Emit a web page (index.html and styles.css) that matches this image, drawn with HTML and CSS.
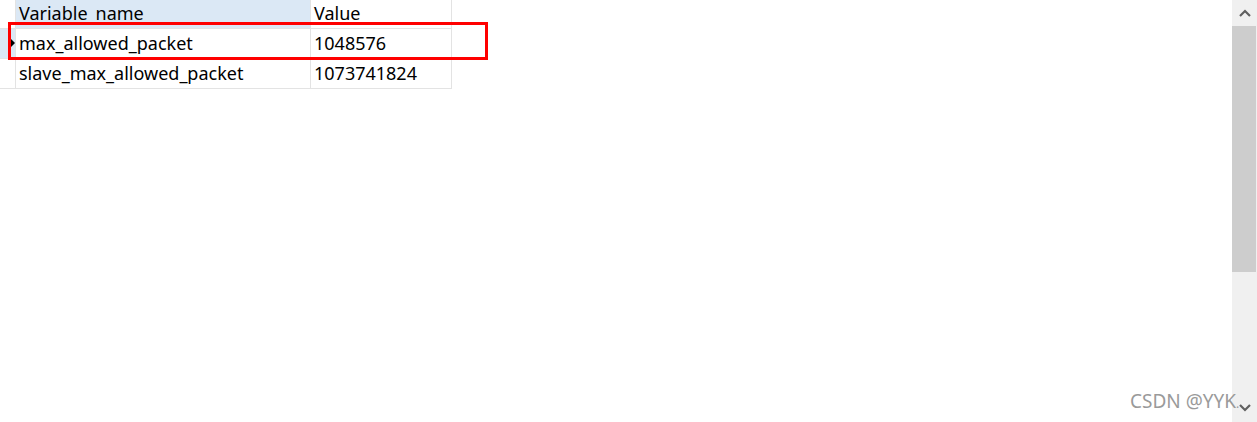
FILE: index.html
```html
<!DOCTYPE html>
<html>
<head>
<meta charset="utf-8">
<link rel="stylesheet" href="styles.css">
</head>
<body>
<div class="page">
  <div class="content">
    <div class="grid">
      <div class="row head">
        <div class="ind"></div>
        <div class="cell c1 sel">Variable_name</div>
        <div class="cell c2">Value</div>
      </div>
      <div class="row">
        <div class="ind cur"><span class="tri"></span></div>
        <div class="cell c1">max_allowed_packet</div>
        <div class="cell c2">1048576</div>
      </div>
      <div class="row">
        <div class="ind"></div>
        <div class="cell c1">slave_max_allowed_packet</div>
        <div class="cell c2">1073741824</div>
      </div>
      <div class="mark"></div>
    </div>
    <div class="watermark">CSDN @YYK<span class="dot">.</span></div>
  </div>
  <div class="scrollbar">
    <div class="arrow up"><svg width="12" height="8" viewBox="0 0 12 8"><path d="M1 7 L6 2 L11 7" fill="none" stroke="#606060" stroke-width="2.2"/></svg></div>
    <div class="thumb"></div>
    <div class="track"></div>
    <div class="arrow down"><svg width="12" height="8" viewBox="0 0 12 8"><path d="M1 1 L6 6 L11 1" fill="none" stroke="#606060" stroke-width="2.2"/></svg></div>
  </div>
</div>
</body>
</html>
```

FILE: styles.css
```css
html, body {
  margin: 0;
  padding: 0;
  background: #fff;
}
.page {
  display: flex;
  width: 1257px;
  height: 422px;
  overflow: hidden;
}
.content {
  flex: 1;
  position: relative;
}
.grid {
  position: relative;
  display: flex;
  flex-direction: column;
  width: 452px;
  font-family: "Noto Sans", "Noto Sans CJK SC", sans-serif;
  font-size: 18px;
  color: #000;
}
.row {
  display: flex;
  height: 30px;
}
.row.head {
  height: 29px;
}
.ind {
  width: 16px;
  box-sizing: border-box;
  border-right: 1px solid #e3e3e3;
  border-bottom: 1px solid #e3e3e3;
  position: relative;
}
.ind.cur {
  background: #dbe8f5;
}
.tri {
  position: absolute;
  left: 11px;
  top: 10px;
  z-index: 2;
  width: 0;
  height: 0;
  border-top: 4px solid transparent;
  border-bottom: 4px solid transparent;
  border-left: 4px solid #000;
}
.cell {
  box-sizing: border-box;
  border-right: 1px solid #e3e3e3;
  border-bottom: 1px solid #e3e3e3;
  padding: 0 0 0 3px;
  line-height: 29px;
  white-space: nowrap;
}
.c1 { width: 295px; }
.c2 { width: 141px; }
.row.head .cell { line-height: 27px; }
.cell.sel { background: #dbe8f5; }
.mark {
  position: absolute;
  left: 8px;
  top: 22px;
  width: 480px;
  height: 38px;
  box-sizing: border-box;
  border: 3px solid #f00;
  z-index: 1;
}
.watermark {
  position: absolute;
  left: 1130px;
  top: 388px;
  font-family: "Noto Sans", sans-serif;
  font-size: 19px;
  color: #9a9a9a;
  white-space: nowrap;
}
.dot {
  font-size: 12px;
}
.scrollbar {
  width: 25px;
  background: #f0f0f0;
  display: flex;
  flex-direction: column;
}
.arrow {
  height: 26px;
  display: flex;
  align-items: center;
  justify-content: center;
}
.thumb {
  height: 246px;
  background: #cdcdcd;
  margin-right: 1px;
}
.track { flex: 1; }
.arrow.down { height: 28px; }
```
